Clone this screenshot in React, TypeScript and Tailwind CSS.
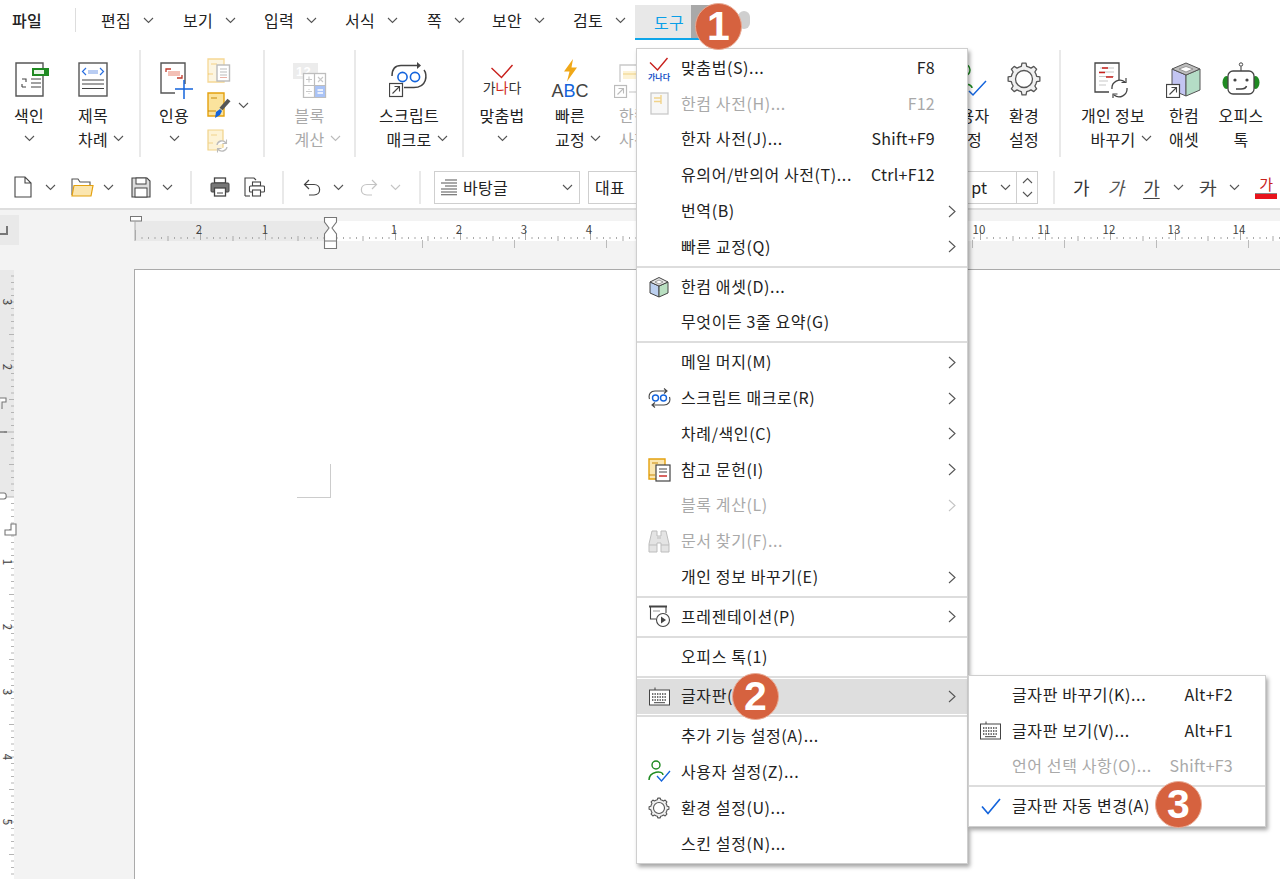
import React from "react";

const G = "#555";

function Chev({ c = "#555", className = "" }: { c?: string; className?: string }) {
  return (
    <svg width="11" height="7" viewBox="0 0 11 7" className={"shrink-0 " + className}>
      <path d="M1 1l4.5 4.5L10 1" fill="none" stroke={c} strokeWidth="1.1" />
    </svg>
  );
}

function gearPath(cx: number, cy: number, rO: number, rI: number, n: number) {
  let d = "";
  for (let i = 0; i < n; i++) {
    const s = (i * 2 * Math.PI) / n;
    const w = (2 * Math.PI) / n;
    const pts = [
      [rI, s - w * 0.5],
      [rI, s - w * 0.27],
      [rO, s - w * 0.16],
      [rO, s + w * 0.16],
      [rI, s + w * 0.27],
    ];
    pts.forEach(([r, a], j) => {
      d += (i === 0 && j === 0 ? "M" : "L") + (cx + r * Math.cos(a)).toFixed(2) + " " + (cy + r * Math.sin(a)).toFixed(2);
    });
  }
  return d + "Z";
}

function Gear({ size, sw = 1.3 }: { size: number; sw?: number }) {
  const c = size / 2;
  return (
    <svg width={size} height={size} viewBox={`0 0 ${size} ${size}`}>
      <path d={gearPath(c, c, c - 1, c * 0.76, 8)} fill="#f0f0f0" stroke="#555" strokeWidth={sw} strokeLinejoin="round" />
      <circle cx={c} cy={c} r={c * 0.5} fill="#fff" stroke="#555" strokeWidth={sw} />
    </svg>
  );
}

function LinkBox({ x, y, s = 14, c = "#444" }: { x: number; y: number; s?: number; c?: string }) {
  return (
    <g>
      <rect x={x + 0.5} y={y + 0.5} width={s - 1} height={s - 1} fill="#fff" stroke={c} strokeWidth="1.2" />
      <path d={`M${x + 3.5} ${y + s - 3.5}L${x + s - 4} ${y + 4}M${x + s - 8.5} ${y + 3.5}H${x + s - 3.5}V${y + 8.5}`} fill="none" stroke={c} strokeWidth="1.1" />
    </g>
  );
}

/* ---------- ribbon icons ---------- */
const IconIndex = () => (
  <svg width="36" height="36" viewBox="0 0 36 36">
    <path d="M28 6V1H1V34H28V14" fill="#fff" stroke={G} strokeWidth="1.4" />
    <rect x="17" y="6" width="17" height="8" fill="#1f8a22" />
    <rect x="19" y="8" width="10" height="4" fill="#e7f4e6" />
    <path d="M16 17H26M16 21H26M16 25H26" stroke="#444" strokeWidth="1.1" />
    <path d="M7 17H11V20M7 25V22M7 25H11" fill="none" stroke="#444" strokeWidth="1.1" />
  </svg>
);
const IconToc = () => (
  <svg width="30" height="36" viewBox="0 0 30 36">
    <rect x="1" y="1" width="28" height="33" fill="#fff" stroke={G} strokeWidth="1.4" />
    <path d="M8 6L4.5 9.5L8 13M22 6L25.5 9.5L22 13" fill="none" stroke="#2a6fe0" strokeWidth="1.2" />
    <rect x="10" y="8" width="10" height="4" fill="#b9cdf3" />
    <path d="M4 18H26M4 22H26M4 26.5H26" stroke="#444" strokeWidth="1.2" />
  </svg>
);
const IconCite = () => (
  <svg width="36" height="38" viewBox="0 0 36 38" className="ml-[6px] mr-[-2px]">
    <path d="M25 22V1H1V31H15" fill="#fff" stroke={G} strokeWidth="1.4" />
    <path d="M6 10V7H11M22 13V16H17" fill="none" stroke="#c0392b" strokeWidth="1.3" />
    <rect x="8" y="9" width="12" height="5" fill="#f3c0b6" />
    <path d="M15 27H33M24 18V37" stroke="#1464dc" strokeWidth="1.5" />
  </svg>
);
const SmallDoc = ({ op = 1 }: { op?: number }) => (
  <path d="M1 1H17V24H1Z" fill="#fbedc4" stroke="#eeb12d" strokeWidth="1.3" opacity={op} />
);
const IconCiteA = () => (
  <svg width="24" height="26" viewBox="0 0 24 26">
    <SmallDoc op={0.5} />
    <path d="M4 6H10M1 16H6" stroke="#eeb12d" strokeWidth="1" opacity="0.5" />
    <rect x="10" y="7" width="12.5" height="16" fill="#fff" stroke="#bbb" strokeWidth="1.4" />
    <path d="M13 11H20M13 14H20M13 17H20" stroke="#bbb" strokeWidth="1" />
    <path d="M13 19.5H20" stroke="#eab0a6" strokeWidth="1" />
  </svg>
);
const IconCiteB = () => (
  <svg width="24" height="27" viewBox="0 0 24 27">
    <path d="M1 1H17V24H1Z" fill="#fbe39d" stroke="#e4a10f" strokeWidth="1.4" />
    <path d="M4 6H10M1 19H9" stroke="#c88a0a" strokeWidth="1.1" />
    <path d="M22 8L14 17" stroke="#555" strokeWidth="4" />
    <path d="M13 17L9 20L8 26L13 23L15 19Z" fill="#1464dc" />
  </svg>
);
const IconCiteC = () => (
  <svg width="22" height="24" viewBox="0 0 22 24">
    <path d="M1 1H16V21H1Z" fill="#fdf3d5" stroke="#f1d38a" strokeWidth="1.2" />
    <path d="M4 6H10M1 14H6" stroke="#f1d38a" strokeWidth="1" />
    <path d="M10 16a5 5 0 0 1 9-2M20 18a5 5 0 0 1-9 2" fill="#fff" stroke="#bbb" strokeWidth="1.3" />
    <path d="M19.5 10.5V14.5H15.5M10.5 23.5V19.5H14.5" fill="none" stroke="#bbb" strokeWidth="1.1" />
  </svg>
);
const IconCalc = () => (
  <svg width="34" height="36" viewBox="0 0 34 36">
    <rect x="0" y="1" width="25" height="16" fill="#ececec" />
    <text x="3" y="14" fontSize="13" fontWeight="700" fill="#fff" fontFamily="Liberation Sans, sans-serif">12</text>
    <rect x="10.5" y="11.5" width="22" height="24" fill="#fff" stroke="#bdbdbd" strokeWidth="1.3" />
    <rect x="22" y="24" width="10" height="11" fill="#a9c3f7" />
    <path d="M21.5 12V35M11 23.5H32" stroke="#bdbdbd" strokeWidth="1.2" />
    <path d="M13 17.5H19M16 14.5V20.5M25 15L30 20M30 15L25 20M13 29.5H19" stroke="#c8c8c8" strokeWidth="1.1" />
    <path d="M16 27V27.8M16 31.2V32" stroke="#c8c8c8" strokeWidth="1.2" />
    <path d="M24.5 28H30M24.5 31H30" stroke="#fff" strokeWidth="1.3" />
  </svg>
);
const IconMacro = () => (
  <svg width="40" height="36" viewBox="0 0 40 36">
    <path d="M3 14C3 7 6 3.5 12 3.5H30" fill="none" stroke="#444" strokeWidth="1.5" />
    <path d="M28 0L32 3.5L28 7Z" fill="#444" />
    <path d="M35 8C38.5 12 38.5 26 24 25.5H15" fill="none" stroke="#444" strokeWidth="1.5" />
    <circle cx="13.5" cy="15" r="4.6" fill="none" stroke="#1464dc" strokeWidth="1.6" />
    <circle cx="26" cy="15" r="4.6" fill="none" stroke="#1464dc" strokeWidth="1.6" />
    <LinkBox x={0} y={21} s={14} />
  </svg>
);
const IconSpell = () => (
  <div className="flex flex-col items-center h-full">
    <svg width="24" height="15" viewBox="0 0 24 15" className="mt-[2px]">
      <path d="M1.5 4L11.5 13.5L22.5 1" fill="none" stroke="#c8201c" strokeWidth="1.4" />
    </svg>
    <span className="text-[14px] tracking-[0px] leading-[19px] text-[#333] mt-[-1px]">
      가<span className="text-[#d02a1d]">나</span>다
    </span>
  </div>
);
const IconAbc = () => (
  <div className="flex flex-col items-center h-full">
    <svg width="15" height="23" viewBox="0 0 15 23" className="mt-[-3px]">
      <path d="M10 0L1 12.5H6.5L4 22.5L14 8.5H8.5Z" fill="#f0a818" />
    </svg>
    <span className="font-['Liberation_Sans',sans-serif] tracking-[0px] text-[18px] leading-[18px] text-[#444]">
      A<span className="text-[#1464dc]">B</span>C
    </span>
  </div>
);
const IconDictGhost = () => (
  <svg width="26" height="36" viewBox="0 0 26 36" className="mr-[14px]">
    <path d="M6 20V3H26" fill="#fff" stroke="#c9c9c9" strokeWidth="1.3" />
    <rect x="9" y="9" width="17" height="8" fill="#fdf3d5" />
    <path d="M9 12H26" stroke="#f1d38a" strokeWidth="1.1" />
    <LinkBox x={0} y={23} s={13} c="#bbb" />
    <path d="M15 30H22" stroke="#c9c9c9" strokeWidth="1.1" />
  </svg>
);
const IconUserCheck = () => (
  <svg width="50" height="36" viewBox="0 0 50 36">
    <circle cx="22" cy="8" r="6" fill="#fff" stroke="#1f8a22" strokeWidth="1.5" />
    <path d="M12 30C12 20 30 20 30 26" fill="none" stroke="#1f8a22" strokeWidth="1.5" />
    <path d="M27 29L31 33L44 19" fill="none" stroke="#1464dc" strokeWidth="1.5" />
  </svg>
);
const IconPersonal = () => (
  <svg width="38" height="36" viewBox="0 0 38 36">
    <path d="M25 18V1H1V30H15" fill="#fff" stroke="#444" strokeWidth="1.3" />
    <path d="M6 6H20M5 10H20M5 14.5H20M5 19H14M5 23H12" stroke="#c8c8c8" strokeWidth="1.1" />
    <path d="M8 6H14M5 10.5H11M12 15H19" stroke="#c8201c" strokeWidth="1.4" />
    <path d="M18 27a8 8 0 0 1 13-7M33 26a8 8 0 0 1-13 7" fill="none" stroke="#444" strokeWidth="1.3" />
    <path d="M32 16V20.5H27.5M19 36V32H23.5" fill="none" stroke="#444" strokeWidth="1.2" />
  </svg>
);
const IconAsset = () => (
  <svg width="36" height="36" viewBox="0 0 36 36">
    <path d="M6 7L20 13V34L6 28Z" fill="#c3c5f2" stroke="#555" strokeWidth="1" />
    <path d="M20 13L34 7V28L20 34Z" fill="#b4dcc6" stroke="#555" strokeWidth="1" />
    <path d="M6 7L20 1L34 7L20 13Z" fill="#bdbdbd" stroke="#555" strokeWidth="1" />
    <path d="M13 7L20 4.5L27 7L20 10Z" fill="#fff" stroke="#888" strokeWidth="0.8" />
    <LinkBox x={0} y={22} s={14} />
  </svg>
);
const IconBot = () => (
  <svg width="38" height="34" viewBox="0 0 38 34">
    <circle cx="19" cy="2.5" r="1.7" fill="none" stroke="#444" />
    <path d="M19 4.5V9" stroke="#444" strokeWidth="1.1" />
    <ellipse cx="4.5" cy="20.5" rx="4" ry="6.5" fill="#1f8a22" />
    <ellipse cx="33.5" cy="20.5" rx="4" ry="6.5" fill="#1f8a22" />
    <rect x="6" y="9" width="26" height="23" rx="5" fill="#fff" stroke="#444" strokeWidth="1.3" />
    <circle cx="13" cy="18" r="1.6" fill="#444" />
    <circle cx="25" cy="18" r="1.6" fill="#444" />
    <path d="M14 27H19C22 27 24 26 24.5 24" fill="none" stroke="#444" strokeWidth="1.5" />
  </svg>
);

/* ---------- toolbar icons ---------- */
const TNew = () => (
  <svg width="18" height="22" viewBox="0 0 18 22">
    <path d="M1 1H11L17 7V21H1Z M11 1V7H17" fill="#fff" stroke="#444" strokeWidth="1.1" />
  </svg>
);
const TOpen = () => (
  <svg width="23" height="19" viewBox="0 0 23 19">
    <path d="M1 17V1H7L9 4H19V7" fill="none" stroke="#555" strokeWidth="1.1" />
    <path d="M3 7.5H22L20 18H1Z" fill="#fbe6b0" stroke="#e4a10f" strokeWidth="1.2" />
  </svg>
);
const TSave = () => (
  <svg width="20" height="21" viewBox="0 0 20 21">
    <path d="M1 1H16L19 4V20H1Z" fill="#ddd" stroke="#444" strokeWidth="1.1" />
    <rect x="5" y="1" width="10" height="6" fill="#fff" stroke="#444" strokeWidth="1" />
    <rect x="4" y="11" width="12" height="9" fill="#fff" stroke="#444" strokeWidth="1" />
  </svg>
);
const TPrint = () => (
  <svg width="20" height="20" viewBox="0 0 20 20">
    <rect x="4.5" y="1" width="11" height="5" fill="#fff" stroke="#444" strokeWidth="1.3" />
    <rect x="1" y="6" width="18" height="9" rx="1" fill="#777" stroke="#444" strokeWidth="1" />
    <rect x="4.5" y="11" width="11" height="8" fill="#fff" stroke="#444" strokeWidth="1.3" />
    <path d="M7 16H13" stroke="#444" />
  </svg>
);
const TPreview = () => (
  <svg width="21" height="20" viewBox="0 0 21 20">
    <path d="M1 19V1H10L12 3" fill="none" stroke="#444" strokeWidth="1.1" />
    <path d="M1 19H6" stroke="#444" strokeWidth="1.1" />
    <rect x="8.5" y="5" width="8" height="4" fill="#fff" stroke="#444" strokeWidth="1.1" />
    <rect x="5.5" y="9" width="15" height="6" rx="1" fill="#fff" stroke="#444" strokeWidth="1.1" />
    <rect x="8.5" y="13" width="8" height="6" fill="#fff" stroke="#444" strokeWidth="1.1" />
  </svg>
);
const TUndo = ({ c = "#444", flip = false }: { c?: string; flip?: boolean }) => (
  <svg width="18" height="17" viewBox="0 0 18 17" className={flip ? "-scale-x-100" : ""}>
    <path d="M2 5.5H11C18.5 5.5 18.5 16 11 16H6M6 1L1.5 5.5L6 10" fill="none" stroke={c} strokeWidth="1.2" />
  </svg>
);
const StyleLines = () => (
  <svg width="18" height="18" viewBox="0 0 18 18" className="shrink-0">
    <path d="M5 2H17M1 5H17M5 8H17M1 11H17M1 14H17M1 16.8H17" stroke="#555" strokeWidth="1.1" />
  </svg>
);

/* ---------- menu icons ---------- */
const MSpell = () => (
  <div className="flex flex-col items-center mt-[2px]">
    <svg width="20" height="15" viewBox="0 0 20 15">
      <path d="M1 5.5L8.5 13L18.5 1" fill="none" stroke="#c8201c" strokeWidth="1.4" />
    </svg>
    <span className="text-[8px] tracking-[0px] leading-[9px] font-bold text-[#1c55c8] whitespace-nowrap">가나다</span>
  </div>
);
const MDict = () => (
  <svg width="19" height="23" viewBox="0 0 19 23">
    <rect x="1" y="1" width="17" height="21" fill="#f7f7f7" stroke="#c9c9c9" strokeWidth="1.3" />
    <path d="M4 6H11M4 9.5H11M11 3V12" stroke="#f1d38a" strokeWidth="1.4" />
  </svg>
);
const MCube = () => (
  <svg width="22" height="22" viewBox="0 0 22 22">
    <path d="M2 6L11 10V21L2 17Z" fill="#bcd0ef" stroke="#444" strokeWidth="1" />
    <path d="M20 6L11 10V21L20 17Z" fill="#b9dfc1" stroke="#444" strokeWidth="1" />
    <path d="M2 6L11 1.5L20 6L11 10Z" fill="#e6e6e6" stroke="#444" strokeWidth="1" />
    <path d="M7 6L11 4L15 6L11 8Z" fill="#fff" stroke="#777" strokeWidth="0.7" />
  </svg>
);
const MMacro = () => (
  <svg width="23" height="20" viewBox="0 0 23 20">
    <path d="M1.5 11C0 6 3 3 7 3H18M16 0.5L19 3L16 5.5" fill="none" stroke="#444" strokeWidth="1.1" />
    <path d="M21.5 9C23 14 20 17 16 17H5M7 14.5L4 17L7 19.5" fill="none" stroke="#444" strokeWidth="1.1" />
    <circle cx="7.5" cy="10" r="3" fill="#fff" stroke="#1464dc" strokeWidth="1.4" />
    <circle cx="15.5" cy="10" r="3" fill="#fff" stroke="#1464dc" strokeWidth="1.4" />
  </svg>
);
const MRef = () => (
  <svg width="23" height="24" viewBox="0 0 23 24">
    <path d="M1 1H17V21H1Z" fill="#fbe6b0" stroke="#e4a10f" strokeWidth="1.4" />
    <path d="M4 5H10M1 17H7" stroke="#c88a0a" strokeWidth="1" />
    <rect x="8" y="7" width="14" height="16" fill="#fff" stroke="#444" strokeWidth="1.2" />
    <path d="M11 11H19M11 14H19" stroke="#444" />
    <path d="M11 18H19" stroke="#c8201c" strokeWidth="1.4" />
  </svg>
);
const MBino = () => (
  <svg width="22" height="23" viewBox="0 0 22 23">
    <path d="M4 1H9V6H13V1H18L21 14V22H13V13H9V22H1V14Z" fill="#e4e4e4" stroke="#bdbdbd" strokeWidth="1" />
    <path d="M1 15H9M13 15H21M9 8H13" stroke="#bdbdbd" />
  </svg>
);
const MPresent = () => (
  <svg width="23" height="23" viewBox="0 0 23 23">
    <path d="M1 1.5H19" stroke="#444" strokeWidth="2" />
    <path d="M2.5 2V14H8M18 2V8" fill="none" stroke="#444" strokeWidth="1.1" />
    <path d="M5 6H12" stroke="#999" />
    <circle cx="15" cy="15" r="6.5" fill="#fff" stroke="#444" strokeWidth="1.1" />
    <path d="M13 11.5L18 15L13 18.5Z" fill="#444" />
  </svg>
);
const MKeys = () => (
  <svg width="21" height="19" viewBox="0 0 21 19">
    <path d="M6 3V0.5" stroke="#444" />
    <rect x="0.5" y="3" width="20" height="15" fill="#fff" stroke="#444" />
    <path d="M3 7H18M3 10H18M3 13H18" stroke="#444" strokeDasharray="1.4 1.1" strokeWidth="1.5" />
    <path d="M5 15.7H16" stroke="#444" />
  </svg>
);
const MUser = () => (
  <svg width="23" height="24" viewBox="0 0 23 24">
    <circle cx="8" cy="5" r="4" fill="#fff" stroke="#1f8a22" strokeWidth="1.4" />
    <path d="M1 20C1 11 15 10 15 15" fill="none" stroke="#1f8a22" strokeWidth="1.5" />
    <path d="M9 16L13.5 21L22 11" fill="none" stroke="#1464dc" strokeWidth="1.3" />
  </svg>
);
const MCheck = () => (
  <svg width="20" height="17" viewBox="0 0 20 17">
    <path d="M1 8.5L7 15.5L19 1" fill="none" stroke="#1464dc" strokeWidth="1.7" />
  </svg>
);

/* ---------- ribbon building blocks ---------- */
function RibbonItem({ w, icon, lines, chev, dis }: { w: string; icon?: React.ReactNode; lines: string[]; chev?: "down" | "line"; dis?: boolean }) {
  const col = dis ? "text-[#a9a9a9]" : "text-[#222]";
  const cc = dis ? "#bbb" : "#555";
  return (
    <div className={"shrink-0 flex flex-col items-center tracking-[0.3px] " + w + " " + col}>
      <div className="h-[48px] pt-[6px] flex justify-center items-start">{icon}</div>
      <div className="h-[23px] leading-[23px] whitespace-nowrap">{lines[0]}</div>
      <div className="h-[23px] flex items-center justify-center whitespace-nowrap">
        {lines[1]}
        {chev === "line" && <Chev c={cc} className="ml-[5px] mr-[-16px]" />}
        {chev === "down" && <Chev c={cc} />}
      </div>
    </div>
  );
}
const RibbonDiv = () => <div className="w-[2px] shrink-0 self-stretch mt-[-6px] bg-[#e9e9e9]" />;
const ToolDiv = ({ ml }: { ml: string }) => <div className={"w-[2px] h-[33px] bg-[#e9e9e9] shrink-0 " + ml} />;

/* ---------- menu ---------- */
type Row = { label?: string; key?: string; icon?: React.ReactNode; sub?: boolean; dis?: boolean; hot?: boolean; sep?: boolean };

const mainRows: Row[] = [
  { label: "맞춤법(S)...", key: "F8", icon: <MSpell /> },
  { label: "한컴 사전(H)...", key: "F12", icon: <MDict />, dis: true },
  { label: "한자 사전(J)...", key: "Shift+F9" },
  { label: "유의어/반의어 사전(T)...", key: "Ctrl+F12" },
  { label: "번역(B)", sub: true },
  { label: "빠른 교정(Q)", sub: true },
  { sep: true },
  { label: "한컴 애셋(D)...", icon: <MCube /> },
  { label: "무엇이든 3줄 요약(G)" },
  { sep: true },
  { label: "메일 머지(M)", sub: true },
  { label: "스크립트 매크로(R)", sub: true, icon: <MMacro /> },
  { label: "차례/색인(C)", sub: true },
  { label: "참고 문헌(I)", sub: true, icon: <MRef /> },
  { label: "블록 계산(L)", sub: true, dis: true },
  { label: "문서 찾기(F)...", icon: <MBino />, dis: true },
  { label: "개인 정보 바꾸기(E)", sub: true },
  { sep: true },
  { label: "프레젠테이션(P)", sub: true, icon: <MPresent /> },
  { sep: true },
  { label: "오피스 톡(1)" },
  { sep: true },
  { label: "글자판(B)", sub: true, icon: <MKeys />, hot: true },
  { sep: true },
  { label: "추가 기능 설정(A)..." },
  { label: "사용자 설정(Z)...", icon: <MUser /> },
  { label: "환경 설정(U)...", icon: <Gear size={22} sw={1.1} /> },
  { label: "스킨 설정(N)..." },
];

const subRows: Row[] = [
  { label: "글자판 바꾸기(K)...", key: "Alt+F2" },
  { label: "글자판 보기(V)...", key: "Alt+F1", icon: <MKeys /> },
  { label: "언어 선택 사항(O)...", key: "Shift+F3", dis: true },
  { sep: true },
  { label: "글자판 자동 변경(A)", icon: <MCheck /> },
];

function MenuRows({ rows, iconW }: { rows: Row[]; iconW: string }) {
  return (
    <>
      {rows.map((r, i) =>
        r.sep ? (
          <div key={i} className="h-[2px] my-[1px] bg-[#dddddd]" />
        ) : (
          <div
            key={i}
            className={"h-[35.8px] flex items-center whitespace-nowrap " + (r.dis ? "text-[#a9a9a9] " : "text-[#222] ") + (r.hot ? "bg-[#dedede]" : "")}
          >
            <div className={"shrink-0 flex justify-center items-center pr-[10px] " + iconW}>{r.icon}</div>
            <div className="flex-1 tracking-[0.6px] mb-[2px]">{r.label}</div>
            {r.key && <div className="tracking-[0.25px] mb-[2px]">{r.key}</div>}
            <div className="w-[32px] shrink-0 pl-[13px]">
              {r.sub && (
                <svg width="8" height="13" viewBox="0 0 8 13" className="block">
                  <path d="M1 1L7 6.5L1 12" fill="none" stroke={r.dis ? "#c4c4c4" : "#555"} strokeWidth="1.1" />
                </svg>
              )}
            </div>
          </div>
        )
      )}
    </>
  );
}

function Badge({ n, pos }: { n: string; pos: string }) {
  return (
    <div className={"absolute w-[47px] h-[47px] rounded-full bg-[#d6623f] border border-[#e8a993] flex items-center justify-center text-white font-['Liberation_Sans',sans-serif] font-bold text-[41px] leading-none " + pos}>
      {n}
    </div>
  );
}

const menus = [
  ["편집", "w-[82px]"],
  ["보기", "w-[81px]"],
  ["입력", "w-[81px]"],
  ["서식", "w-[82px]"],
  ["쪽", "w-[65px]"],
  ["보안", "w-[81px]"],
  ["검토", "w-[62px]"],
];

/* ---------- rulers ---------- */
function HRuler() {
  const ticks: React.ReactNode[] = [];
  for (let k = -30; k <= 147; k++) {
    const x = 330 + k * 6.5;
    const m = ((k % 10) + 10) % 10;
    const h = m === 0 ? 10 : m === 5 ? 5 : 2;
    const y = m === 5 ? 26 : m === 0 ? 20 : 27;
    ticks.push(<rect key={k} x={x} y={y} width="1" height={h} fill="#aaa" />);
  }
  const nums = [
    [199, "2"], [265, "1"], [394, "1"], [459, "2"], [524, "3"], [589, "4"],
    [979, "10"], [1044, "11"], [1109, "12"], [1174, "13"], [1239, "14"],
  ] as [number, string][];
  const tabs = [422, 514, 606, 972, 1064, 1156, 1248];
  return (
    <svg width="1280" height="59" viewBox="0 0 1280 59" className="block">
      <rect x="0" y="5" width="19" height="30" fill="#e9e9e9" />
      <path d="M0 24H7V16" fill="none" stroke="#777" strokeWidth="2" />
      <rect x="135" y="11" width="195" height="20" fill="#e9e9e9" />
      <rect x="330" y="11" width="950" height="20" fill="#fff" />
      {ticks}
      {tabs.map((x) => <rect key={x} x={x} y="30" width="1" height="8" fill="#bbb" />)}
      {nums.map(([x, t]) => (
        <text key={t + x} x={x} y="24" fontSize="11.5" textAnchor="middle" fill="#444" fontFamily="Noto Sans CJK KR, sans-serif">{t}</text>
      ))}
      <rect x="130.5" y="6.5" width="11" height="4.5" fill="#fff" stroke="#777" />
      <path d="M135 11V31" stroke="#aaa" />
      <path d="M324.5 7.5H336.5V12L332 18L336.5 24V38.5H324.5V24L329 18L324.5 12Z M324.5 31H336.5" fill="#fff" stroke="#777" strokeWidth="1.1" />
    </svg>
  );
}

function VRuler() {
  const ticks: React.ReactNode[] = [];
  for (let k = -34; k <= 60; k++) {
    const y = 227.5 + k * 6.5;
    if (y < 0) continue;
    const m = ((k % 10) + 10) % 10;
    ticks.push(<rect key={k} x={m === 0 ? 4 : m === 5 ? 9 : 11} y={y} width={m === 0 ? 10 : m === 5 ? 5 : 3} height="1" fill="#b5b5b5" />);
  }
  const nums: [number, string][] = [[33, "3"], [98, "2"], [293, "1"], [358, "2"], [423, "3"], [488, "4"], [553, "5"]];
  return (
    <svg width="18" height="610" viewBox="0 0 18 610" className="block shrink-0">
      <rect x="0" y="1" width="14" height="227" fill="#e9e9e9" />
      <rect x="0" y="228" width="14" height="382" fill="#fff" />
      {ticks}
      {nums.map(([y, t]) => (
        <text key={y} x="0" y="0" fontSize="11.5" fill="#444" textAnchor="middle" fontFamily="Noto Sans CJK KR, sans-serif" transform={`translate(3 ${y}) rotate(90)`}>{t}</text>
      ))}
      <path d="M0 163H7" stroke="#444" />
      <path d="M0 129H6V133H2V140" fill="#fff" stroke="#777" strokeWidth="1.1" />
      <path d="M0 224H4C7 224 7 230 4 230H0" fill="#fff" stroke="#777" strokeWidth="1.1" />
      <path d="M16 255V266H5V261H11V255Z" fill="#fff" stroke="#777" strokeWidth="1.1" />
    </svg>
  );
}

export default function App() {
  return (
    <div className="relative w-[1280px] h-[879px] overflow-hidden bg-white flex flex-col text-[16px] text-[#222] font-['Noto_Sans_CJK_KR','Noto_Sans',sans-serif]">
      {/* menu bar */}
      <div className="h-[40px] shrink-0 flex items-center tracking-[0.3px]">
        <div className="w-[75px] pl-[12px] shrink-0 font-medium">파일</div>
        <div className="w-[1px] h-[24px] bg-[#ddd] shrink-0" />
        <div className="flex pl-[25px]">
          {menus.map(([m, w]) => (
            <div key={m} className={"flex items-center shrink-0 " + w}>
              <span>{m}</span>
              <Chev className="ml-[12px]" />
            </div>
          ))}
        </div>
        <div className="self-end h-[35px] w-[56px] shrink-0 bg-[#e8e8e8] border-b-[2px] border-[#0ea5e9] flex items-center justify-center pl-[12px] text-[#0a9fe8]">도구</div>
        <div className="self-end h-[35px] w-[20px] shrink-0 bg-[#a9a9a9] border-b-[2px] border-[#0ea5e9]" />
        <div className="w-[12px] h-[18px] ml-[27px] rounded-full bg-[#cfcfcf] shrink-0" />
      </div>

      {/* ribbon */}
      <div className="h-[118px] shrink-0 pt-[16px] pb-[1px] flex">
        <RibbonItem w="w-[58px]" icon={<div className="pl-[7px]"><IconIndex /></div>} lines={["색인"]} chev="down" />
        <RibbonItem w="w-[70px]" icon={<IconToc />} lines={["제목", "차례"]} chev="line" />
        <div className="w-[11px] shrink-0" />
        <RibbonDiv />
        <RibbonItem w="w-[66px]" icon={<IconCite />} lines={["인용"]} chev="down" />
        <div className="w-[56px] shrink-0 flex flex-col mt-[2px]">
          <IconCiteA />
          <div className="flex items-center mt-[8px]">
            <IconCiteB />
            <Chev className="ml-[7px]" />
          </div>
          <div className="mt-[10px]"><IconCiteC /></div>
        </div>
        <RibbonDiv />
        <RibbonItem w="w-[89px]" icon={<IconCalc />} lines={["블록", "계산"]} chev="line" dis />
        <RibbonDiv />
        <RibbonItem w="w-[106px]" icon={<IconMacro />} lines={["스크립트", "매크로"]} chev="line" />
        <RibbonDiv />
        <RibbonItem w="w-[76px]" icon={<IconSpell />} lines={["맞춤법"]} chev="down" />
        <RibbonItem w="w-[60px]" icon={<IconAbc />} lines={["빠른", "교정"]} chev="line" />
        <RibbonItem w="w-[68px]" icon={<IconDictGhost />} lines={["한컴", "사전"]} chev="line" dis />
        <div className="w-[274px] shrink-0" />
        <RibbonItem w="w-[50px]" icon={<IconUserCheck />} lines={["사용자", "설정"]} />
        <div className="w-[9px] shrink-0" />
        <RibbonItem w="w-[46px]" icon={<Gear size={34} />} lines={["환경", "설정"]} />
        <div className="w-[12px] shrink-0" />
        <RibbonDiv />
        <RibbonItem w="w-[104px]" icon={<IconPersonal />} lines={["개인 정보", "바꾸기"]} chev="line" />
        <RibbonItem w="w-[38px]" icon={<IconAsset />} lines={["한컴", "애셋"]} />
        <RibbonItem w="w-[76px]" icon={<IconBot />} lines={["오피스", "톡"]} />
      </div>

      {/* toolbar */}
      <div className="h-[52px] shrink-0 border-b-[2px] border-[#dedede] flex items-center pt-[8px]">
        <div className="ml-[14px]"><TNew /></div>
        <Chev className="ml-[13px]" />
        <div className="ml-[15px]"><TOpen /></div>
        <Chev className="ml-[9px]" />
        <div className="ml-[17px]"><TSave /></div>
        <Chev className="ml-[11px]" />
        <ToolDiv ml="ml-[17px]" />
        <div className="ml-[18px]"><TPrint /></div>
        <div className="ml-[14px]"><TPreview /></div>
        <ToolDiv ml="ml-[17px]" />
        <div className="ml-[19px]"><TUndo /></div>
        <Chev className="ml-[12px]" />
        <div className="ml-[16px]"><TUndo c="#c4c4c4" flip /></div>
        <Chev c="#c4c4c4" className="ml-[12px]" />
        <ToolDiv ml="ml-[18px]" />
        <div className="ml-[13px] w-[146px] h-[33px] shrink-0 border border-[#cfcfcf] flex items-center pl-[5px] pr-[6px]">
          <StyleLines />
          <span className="ml-[5px] flex-1 tracking-[0.3px]">바탕글</span>
          <Chev />
        </div>
        <div className="ml-[8px] w-[140px] h-[33px] shrink-0 border border-[#cfcfcf] flex items-center pl-[6px] tracking-[0.3px]">대표</div>
        <div className="ml-[173px] w-[137px] h-[33px] shrink-0 border border-[#cfcfcf] flex items-center justify-end">
          <span>pt</span>
          <Chev className="ml-[13px] mr-[5px]" />
          <div className="w-[21px] h-full border-l border-[#cfcfcf] flex flex-col items-center justify-center gap-[7px]">
            <svg width="11" height="7" viewBox="0 0 11 7"><path d="M1 6L5.5 1.5L10 6" fill="none" stroke="#555" strokeWidth="1.1" /></svg>
            <Chev />
          </div>
        </div>
        <ToolDiv ml="ml-[15px]" />
        <span className="ml-[18px] text-[18px] text-[#333] leading-none">가</span>
        <span className="ml-[18px] text-[18px] text-[#555] leading-none italic">가</span>
        <span className="ml-[19px] text-[18px] text-[#444] leading-none underline underline-offset-[3px]">가</span>
        <Chev className="ml-[13px]" />
        <span className="ml-[16px] text-[18px] text-[#444] leading-none line-through">가</span>
        <Chev className="ml-[13px]" />
        <div className="ml-[15px] w-[22px] shrink-0 flex flex-col items-center">
          <span className="text-[15px] leading-[18px] text-[#c8201c]">가</span>
          <div className="w-[22px] h-[6px] bg-[#e8141c] border-t border-[#888]" />
        </div>
      </div>

      {/* ruler */}
      <div className="h-[59px] shrink-0 bg-[#f3f3f3]"><HRuler /></div>

      {/* canvas */}
      <div className="flex-1 flex bg-[#f3f3f3] min-h-0">
        <VRuler />
        <div className="ml-[116px] flex-1 bg-white border-l border-t border-[#aaaaaa]">
          <div className="ml-[162px] mt-[194px] w-[34px] h-[34px] border-r border-b border-[#cccccc]" />
        </div>
      </div>

      {/* menus */}
      <div className="absolute left-[636px] top-[48px] w-[332px] h-[816px] bg-white border border-[#cfcfcf] pt-[1px] shadow-[2px_3px_4px_rgba(0,0,0,0.35)]">
        <MenuRows rows={mainRows} iconW="w-[44px] pl-[10px]" />
      </div>
      <div className="absolute left-[968px] top-[675px] w-[298px] h-[152px] bg-white border border-[#cfcfcf] pt-[1px] shadow-[2px_3px_4px_rgba(0,0,0,0.35)]">
        <MenuRows rows={subRows} iconW="w-[43px] pl-[10px]" />
      </div>

      <Badge n="1" pos="left-[695px] top-[3px]" />
      <Badge n="2" pos="left-[732px] top-[673px]" />
      <Badge n="3" pos="left-[1155px] top-[781px]" />
    </div>
  );
}
